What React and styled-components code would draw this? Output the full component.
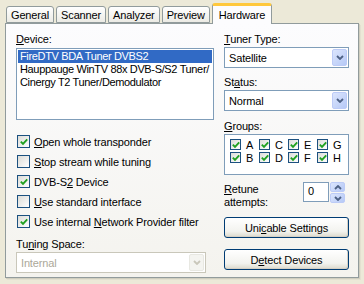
import styled, { createGlobalStyle } from 'styled-components';

const GlobalStyle = createGlobalStyle`
	html, body {
		margin: 0;
		padding: 0;
		background: #ece9d8;
	}
	body {
		font-family: "Liberation Sans", Arial, sans-serif;
		font-size: 11px;
		letter-spacing: -0.15px;
		color: #000;
	}
`;

const Window = styled.div`
	width: 364px;
	height: 284px;
	padding: 3px 5px 0 5px;
	box-sizing: border-box;
`;

const TabStrip = styled.div`
	display: flex;
	align-items: flex-end;
	height: 20px;
	padding-left: 1px;
	position: relative;
	z-index: 1;
`;

const Tab = styled.div`
	box-sizing: border-box;
	height: ${(p) => (p.$active ? '21px' : '17px')};
	margin-bottom: ${(p) => (p.$active ? '-1px' : '0')};
	margin-left: ${(p) => (p.$active ? '0' : '0')};
	margin-right: ${(p) => (p.$active ? '0' : '2px')};
	padding: 0 ${(p) => (p.$active ? '6px' : '4px')};
	display: flex;
	align-items: ${(p) => (p.$active ? 'flex-start' : 'center')};
	padding-top: ${(p) => (p.$active ? '3px' : '0')};
	border: 1px solid #919b9c;
	border-bottom: ${(p) => (p.$active ? 'none' : '1px solid #919b9c')};
	border-top: ${(p) => (p.$active ? '3px solid #ffc83c' : '1px solid #919b9c')};
	border-radius: 3px 3px 0 0;
	background: ${(p) =>
		p.$active ? '#fcfcfe' : 'linear-gradient(#ffffff, #f3f3ef 60%, #ecebe5)'};
	white-space: nowrap;
`;

const Panel = styled.div`
	box-sizing: border-box;
	width: 354px;
	height: 255px;
	border: 1px solid #919b9c;
	background: linear-gradient(#fcfcfe, #f4f3ee);
	box-shadow: 1px 1px 0 #d0cebf, 2px 2px 0 #e3e0d0;
	display: flex;
	gap: 10px;
	padding: 9px 0 0 10px;
`;

const Column = styled.div`
	display: flex;
	flex-direction: column;
	width: ${(p) => p.$width}px;
`;

const Label = styled.div`
	height: 13px;
	line-height: 13px;
	margin-top: ${(p) => p.$top || 0}px;
	margin-bottom: 1px;
`;

const Key = styled.span`
	text-decoration: underline;
	text-underline-offset: 1px;
`;

const ListBox = styled.div`
	box-sizing: border-box;
	height: 72px;
	margin-top: 1px;
	border: 1px solid #7f9db9;
	background: #fff;
	padding: 1px;
`;

const ListItem = styled.div`
	height: 13px;
	line-height: 13px;
	padding: 0 1px 0 2px;
	letter-spacing: -0.35px;
	white-space: nowrap;
	overflow: hidden;
	background: ${(p) => (p.$selected ? '#316ac5' : 'transparent')};
	color: ${(p) => (p.$selected ? '#fff' : '#000')};
`;

const CheckList = styled.div`
	display: flex;
	flex-direction: column;
	gap: 7px;
	margin-top: 15px;
`;

const CheckRow = styled.div`
	display: flex;
	align-items: center;
	gap: ${(p) => p.$gap || 4}px;
	height: 13px;
	white-space: nowrap;
`;

const Box = styled.div`
	box-sizing: border-box;
	width: ${(p) => p.$size}px;
	height: ${(p) => p.$size}px;
	flex: none;
	border: 1px solid #1c5180;
	background: linear-gradient(135deg, #dcdcd7, #ffffff);
	display: flex;
	align-items: center;
	justify-content: center;
	margin-left: 1px;
`;

const Combo = styled.div`
	box-sizing: border-box;
	height: 21px;
	width: ${(p) => (p.$width ? `${p.$width}px` : 'auto')};
	border: 1px solid ${(p) => (p.$disabled ? '#c9c7ba' : '#7f9db9')};
	background: #fff;
	display: flex;
	align-items: center;
	padding: 1px;
	color: ${(p) => (p.$disabled ? '#aca899' : '#000')};
`;

const ComboText = styled.div`
	flex: 1;
	padding-left: 3px;
`;

const ArrowButton = styled.div`
	box-sizing: border-box;
	width: 15px;
	height: 17px;
	border-radius: 2px;
	border: 1px solid ${(p) => (p.$disabled ? '#e8e8e2' : '#bccbf7')};
	background: ${(p) =>
		p.$disabled ? '#f4f4f0' : 'linear-gradient(135deg, #dbe5fd, #b6c9f6)'};
	display: flex;
	align-items: center;
	justify-content: center;
`;

const GroupBox = styled.div`
	box-sizing: border-box;
	height: 41px;
	border: 1px solid #7f9db9;
	background: #fff;
	display: grid;
	grid-template-columns: repeat(4, 29px);
	grid-template-rows: 13px 13px;
	grid-auto-flow: column;
	padding: 3px 0 0 4px;
`;

const RetuneRow = styled.div`
	display: flex;
	align-items: flex-start;
	margin-top: 7px;
	height: 26px;
`;

const RetuneLabel = styled.div`
	flex: 1;
	line-height: 13px;
	margin-top: 1px;
`;

const SpinInput = styled.div`
	box-sizing: border-box;
	width: 26px;
	height: 20px;
	border: 1px solid #7f9db9;
	background: #fff;
	padding: 2px 0 0 4px;
`;

const SpinButtons = styled.div`
	display: flex;
	flex-direction: column;
	gap: 1px;
	margin-left: 1px;
	margin-right: 4px;
`;

const SpinHalf = styled.div`
	box-sizing: border-box;
	width: 15px;
	height: 10px;
	border-radius: 2px;
	border: 1px solid #bccbf7;
	background: linear-gradient(135deg, #dbe5fd, #b6c9f6);
	display: flex;
	align-items: center;
	justify-content: center;
`;

const Button = styled.div`
	box-sizing: border-box;
	height: 21px;
	margin-top: ${(p) => p.$top}px;
	border: 1px solid #003c74;
	border-radius: 3px;
	background: linear-gradient(#ffffff, #f3f3ef 70%, #dcd9cc);
	box-shadow: inset -1px -1px 0 #d6d0c5;
	display: flex;
	align-items: center;
	justify-content: center;
`;

const Check = () => (
	<svg width="8" height="8" viewBox="0 0 8 8">
		<path d="M0.8 3.6 L3 5.8 L7.2 1.4" fill="none" stroke="#21a121" strokeWidth="1.9" />
	</svg>
);

const Chevron = ({ color, up }) => (
	<svg width="8" height="5" viewBox="0 0 8 5">
		<path
			d={up ? 'M1 4 L4 1 L7 4' : 'M1 1 L4 4 L7 1'}
			fill="none"
			stroke={color}
			strokeWidth="1.8"
		/>
	</svg>
);

const CheckBox = ({ checked, size = 13, gap, children }) => (
	<CheckRow $gap={gap}>
		<Box $size={size}>{checked && <Check />}</Box>
		<span>{children}</span>
	</CheckRow>
);

const ComboBox = ({ value, disabled, width }) => (
	<Combo $disabled={disabled} $width={width}>
		<ComboText>{value}</ComboText>
		<ArrowButton $disabled={disabled}>
			<Chevron color={disabled ? '#c9c7ba' : '#4d6185'} />
		</ArrowButton>
	</Combo>
);

const tabs = ['General', 'Scanner', 'Analyzer', 'Preview', 'Hardware'];
const devices = [
	'FireDTV BDA Tuner DVBS2',
	'Hauppauge WinTV 88x DVB-S/S2 Tuner/',
	'Cinergy T2 Tuner/Demodulator',
];
const groups = ['A', 'B', 'C', 'D', 'E', 'F', 'G', 'H'];

const App = () => (
	<>
		<GlobalStyle />
		<Window>
			<TabStrip>
				{tabs.map((t) => (
					<Tab key={t} $active={t === 'Hardware'}>
						{t}
					</Tab>
				))}
			</TabStrip>
			<Panel>
				<Column $width={198}>
					<Label>
						<Key>D</Key>evice:
					</Label>
					<ListBox>
						{devices.map((d, i) => (
							<ListItem key={d} $selected={i === 0}>
								{d}
							</ListItem>
						))}
					</ListBox>
					<CheckList>
						<CheckBox checked>
							<Key>O</Key>pen whole transponder
						</CheckBox>
						<CheckBox>
							<Key>S</Key>top stream while tuning
						</CheckBox>
						<CheckBox checked>
							DVB-S<Key>2</Key> Device
						</CheckBox>
						<CheckBox>
							<Key>U</Key>se standard interface
						</CheckBox>
						<CheckBox checked>
							Use internal <Key>N</Key>etwork Provider filter
						</CheckBox>
					</CheckList>
					<Label $top={10}>
						Tu<Key>n</Key>ing Space:
					</Label>
					<ComboBox value="Internal" disabled width={190} />
				</Column>
				<Column $width={125}>
					<Label>
						<Key>T</Key>uner Type:
					</Label>
					<ComboBox value="Satellite" />
					<Label $top={8}>
						St<Key>a</Key>tus:
					</Label>
					<ComboBox value="Normal" />
					<Label $top={9}>
						<Key>G</Key>roups:
					</Label>
					<GroupBox>
						{groups.map((g) => (
							<CheckBox key={g} checked size={11} gap={5}>
								{g}
							</CheckBox>
						))}
					</GroupBox>
					<RetuneRow>
						<RetuneLabel>
							<Key>R</Key>etune
							<br />
							attempts:
						</RetuneLabel>
						<SpinInput>0</SpinInput>
						<SpinButtons>
							<SpinHalf>
								<Chevron color="#4d6185" up />
							</SpinHalf>
							<SpinHalf>
								<Chevron color="#4d6185" />
							</SpinHalf>
						</SpinButtons>
					</RetuneRow>
					<Button $top={9}>
						Uni<Key>c</Key>able Settings
					</Button>
					<Button $top={11}>
						D<Key>e</Key>tect Devices
					</Button>
				</Column>
			</Panel>
		</Window>
	</>
);

export default App;
